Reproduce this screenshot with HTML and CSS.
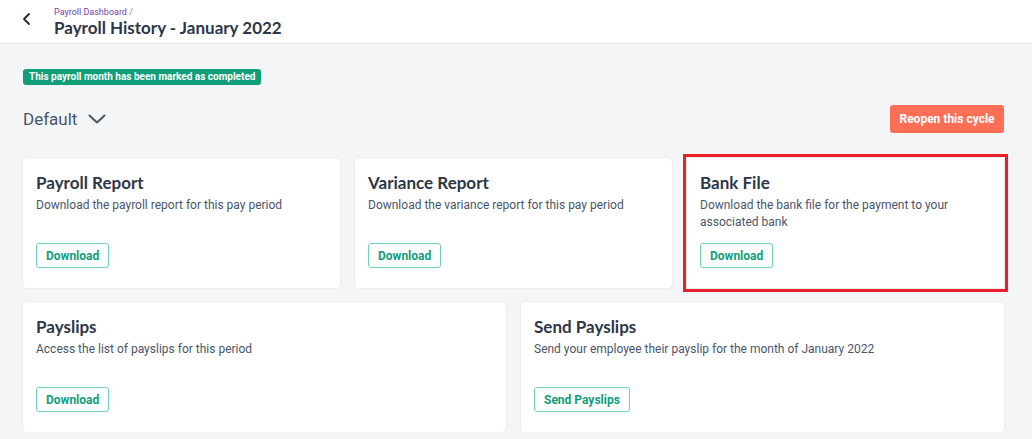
FILE: index.html
```html
<!DOCTYPE html>
<html lang="en">
<head>
    <meta charset="UTF-8">
    <meta name="viewport" content="width=device-width, initial-scale=1.0">
    <title>Payroll History - January 2022</title>
    <link rel="stylesheet" href="styles.css">
</head>
<body>
    <header class="topbar">
        <button class="back-button" aria-label="Back">
            <svg width="14" height="14" viewBox="0 0 14 14"><path d="M9 2 L4 7 L9 12" fill="none" stroke="#1f2937" stroke-width="1.8" stroke-linecap="round" stroke-linejoin="round"/></svg>
        </button>
        <div class="title-block">
            <div class="breadcrumb"><a href="#">Payroll Dashboard</a> <span>/</span></div>
            <h1>Payroll History - January 2022</h1>
        </div>
    </header>

    <main class="content">
        <span class="status-badge">This payroll month has been marked as completed</span>

        <div class="toolbar">
            <button class="group-select">
                Default
                <svg width="18" height="10" viewBox="0 0 18 10"><path d="M1.5 1.5 L9 8.5 L16.5 1.5" fill="none" stroke="#4a5568" stroke-width="2" stroke-linecap="round" stroke-linejoin="round"/></svg>
            </button>
            <button class="reopen-button">Reopen this cycle</button>
        </div>

        <div class="card-row three">
            <div class="card">
                <h2>Payroll Report</h2>
                <p>Download the payroll report for this pay period</p>
                <button class="outline-button">Download</button>
            </div>
            <div class="card">
                <h2>Variance Report</h2>
                <p>Download the variance report for this pay period</p>
                <button class="outline-button">Download</button>
            </div>
            <div class="card highlighted">
                <h2>Bank File</h2>
                <p>Download the bank file for the payment to your associated bank</p>
                <button class="outline-button">Download</button>
            </div>
        </div>

        <div class="card-row two">
            <div class="card">
                <h2>Payslips</h2>
                <p>Access the list of payslips for this period</p>
                <button class="outline-button">Download</button>
            </div>
            <div class="card">
                <h2>Send Payslips</h2>
                <p>Send your employee their payslip for the month of January 2022</p>
                <button class="outline-button">Send Payslips</button>
            </div>
        </div>
    </main>
</body>
</html>
```

FILE: styles.css
```css
* {
    margin: 0;
    padding: 0;
    box-sizing: border-box;
}
body {
    background: #f4f5f7;
    font-family: 'Roboto', 'Liberation Sans', sans-serif;
    color: #2d3748;
    overflow: hidden;
}
.topbar {
    display: flex;
    align-items: flex-start;
    height: 44px;
    background: #ffffff;
    border-bottom: 1px solid #e2e5ea;
    padding: 7px 0 0 20px;
}
.back-button {
    background: none;
    border: none;
    width: 14px;
    height: 14px;
    margin-top: 5px;
    cursor: pointer;
}
.title-block {
    margin-left: 20px;
}
.breadcrumb {
    font-size: 9px;
    line-height: 10px;
    color: #888;
}
.breadcrumb a {
    color: #7b3fa0;
    text-decoration: none;
}
.topbar h1 {
    font-family: 'Lato', sans-serif;
    font-weight: 700;
    font-size: 17px;
    line-height: 22px;
    color: #2d3748;
}
.content {
    padding: 21px 28px 0 23px;
}
.status-badge {
    display: inline-block;
    background: #0e9f78;
    color: #ffffff;
    font-size: 10px;
    font-weight: 700;
    line-height: 16px;
    padding: 0 6px;
    border-radius: 3px;
}
.toolbar {
    display: flex;
    justify-content: space-between;
    align-items: center;
    margin-top: 20px;
    height: 28px;
}
.group-select {
    display: flex;
    align-items: center;
    gap: 11px;
    background: none;
    border: none;
    font-family: 'Roboto', sans-serif;
    font-size: 17px;
    color: #4a5568;
    cursor: pointer;
}
.reopen-button {
    background: #ff6f55;
    color: #ffffff;
    border: none;
    border-radius: 3px;
    font-family: 'Roboto', sans-serif;
    font-weight: 700;
    font-size: 12px;
    height: 28px;
    width: 114px;
    cursor: pointer;
}
.card-row {
    display: grid;
    gap: 15px;
}
.card-row.three {
    grid-template-columns: 1fr 1fr 1fr;
    margin-top: 25px;
}
.card-row.two {
    grid-template-columns: 1fr 1fr;
    margin-top: 14px;
}
.card {
    display: flex;
    flex-direction: column;
    align-items: flex-start;
    height: 130px;
    background: #ffffff;
    border-radius: 4px;
    box-shadow: 0 0 2px rgba(0, 0, 0, 0.12);
    padding: 15px 13px 20px 13px;
}
.card.highlighted {
    outline: 3px solid #e8202a;
    outline-offset: 1px;
    border-radius: 0;
}
.card h2 {
    font-family: 'Lato', sans-serif;
    font-weight: 700;
    font-size: 17px;
    line-height: 20px;
    color: #2d3748;
}
.card p {
    font-size: 12px;
    line-height: 17px;
    color: #4a5568;
    margin-top: 4px;
}
.outline-button {
    margin-top: auto;
    height: 25px;
    padding: 0 9px;
    background: #ffffff;
    border: 1px solid #6fd0be;
    border-radius: 3px;
    color: #0f9d7a;
    font-family: 'Roboto', sans-serif;
    font-weight: 700;
    font-size: 12px;
    cursor: pointer;
}
```
